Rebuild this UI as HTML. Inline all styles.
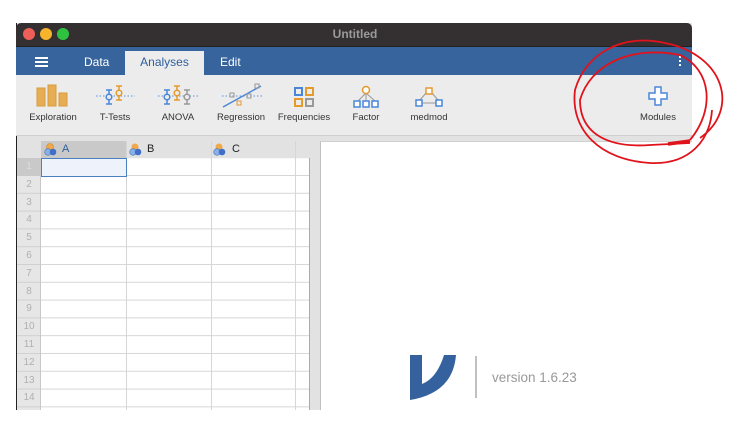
<!DOCTYPE html>
<html><head><style>
*{margin:0;padding:0;box-sizing:border-box}
body{width:740px;height:430px;background:#fff;position:relative;overflow:hidden;font-family:"Liberation Sans",sans-serif}
.a{position:absolute}
.lbl{position:absolute;top:112px;font-size:9.5px;color:#333;text-align:center;width:80px}
.rn{position:absolute;left:17px;width:24px;text-align:center;font-size:10px;color:#b0b0b0}
</style></head><body>
<div class="a" style="left:16px;top:23px;width:676px;height:387px;background:#e2e2e2;border-left:1px solid #222"></div>
<div class="a" style="left:16px;top:23px;width:676px;height:23px;background:#343032;border-radius:5px 5px 0 0"></div>
<div class="a" style="left:23px;top:28px;width:12px;height:12px;border-radius:50%;background:#ed5f57"></div>
<div class="a" style="left:40px;top:28px;width:12px;height:12px;border-radius:50%;background:#f5b42c"></div>
<div class="a" style="left:57px;top:28px;width:12px;height:12px;border-radius:50%;background:#2fc241"></div>
<div class="a" style="left:300px;top:27px;width:110px;text-align:center;color:#9a9a9a;font-weight:bold;font-size:12px">Untitled</div>
<div class="a" style="left:16px;top:46px;width:676px;height:29px;background:#38649e;border-top:1px solid #222"></div>
<div class="a" style="left:35px;top:57px;width:13px;height:2px;background:#fff;box-shadow:0 4px #fff,0 8px #fff"></div>
<div class="a" style="left:84px;top:55px;color:#fff;font-size:12px">Data</div>
<div class="a" style="left:125px;top:51px;width:79px;height:24px;background:#ececec"></div>
<div class="a" style="left:125px;top:55px;width:79px;text-align:center;color:#2e5f9c;font-size:12px">Analyses</div>
<div class="a" style="left:220px;top:55px;color:#fff;font-size:12px">Edit</div>
<div class="a" style="left:679px;top:56px;width:2px;height:2px;background:#fff;box-shadow:0 4px #fff,0 8px #fff"></div>
<div class="a" style="left:16px;top:75px;width:676px;height:61px;background:#ececec;border-bottom:1px solid #cfcfcf"></div>
<svg class="a" style="left:0;top:0" width="740" height="140">
 <g fill="#e7ad55" stroke="#d99a3d" stroke-width="1"><rect x="37" y="88" width="8" height="18"/><rect x="48" y="85" width="8" height="21"/><rect x="59" y="93" width="8" height="13"/></g>
 <g stroke-width="1.5" fill="none">
  <line x1="96" y1="96" x2="135" y2="96" stroke="#8ab0e0" stroke-dasharray="1.5 2"/>
  <path d="M106 90h6M109 90v14M106 104h6" stroke="#4a86d8"/><circle cx="109" cy="97" r="2.8" fill="#ececec" stroke="#4a86d8"/>
  <path d="M116 86h6M119 86v14M116 100h6" stroke="#e59a2e"/><circle cx="119" cy="93" r="2.8" fill="#ececec" stroke="#e59a2e"/>
  <line x1="158" y1="96" x2="198" y2="96" stroke="#8ab0e0" stroke-dasharray="1.5 2"/>
  <path d="M164 90h6M167 90v14M164 104h6" stroke="#4a86d8"/><circle cx="167" cy="97" r="2.8" fill="#ececec" stroke="#4a86d8"/>
  <path d="M174 86h6M177 86v14M174 100h6" stroke="#e59a2e"/><circle cx="177" cy="93" r="2.8" fill="#ececec" stroke="#e59a2e"/>
  <path d="M184 90h6M187 90v14M184 104h6" stroke="#999"/><circle cx="187" cy="97" r="2.8" fill="#ececec" stroke="#999"/>
  <line x1="222" y1="96" x2="262" y2="96" stroke="#8ab0e0" stroke-dasharray="1.5 2"/>
  <line x1="223" y1="107" x2="261" y2="86" stroke="#4a86d8"/>
  <rect x="230" y="93" width="4" height="4" stroke="#999" stroke-width="1"/><rect x="247" y="94" width="4" height="4" stroke="#999" stroke-width="1"/><rect x="237" y="101" width="4" height="4" stroke="#e59a2e" stroke-width="1"/><rect x="255" y="84" width="4" height="4" stroke="#999" stroke-width="1"/>
  <rect x="295" y="88" width="7" height="7" stroke="#4a86d8" stroke-width="2"/><rect x="306" y="88" width="7" height="7" stroke="#e59a2e" stroke-width="2"/>
  <rect x="295" y="99" width="7" height="7" stroke="#e59a2e" stroke-width="2"/><rect x="306" y="99" width="7" height="7" stroke="#999" stroke-width="2"/>
  <path d="M366 93L358 101M366 93V101M366 93L375 101" stroke="#999" stroke-width="1"/>
  <circle cx="366" cy="90" r="3.5" fill="#fff" stroke="#e59a2e"/>
  <rect x="354" y="101" width="6" height="6" fill="#fff" stroke="#4a86d8"/><rect x="363" y="101" width="6" height="6" fill="#fff" stroke="#4a86d8"/><rect x="372" y="101" width="6" height="6" fill="#fff" stroke="#4a86d8"/>
  <path d="M426 93L420 100M432 93L438 100M422 103H436" stroke="#999" stroke-width="1"/>
  <rect x="426" y="88" width="6" height="6" fill="#fff" stroke="#e59a2e"/><rect x="416" y="100" width="6" height="6" fill="#fff" stroke="#4a86d8"/><rect x="436" y="100" width="6" height="6" fill="#fff" stroke="#4a86d8"/>
  <path d="M655 87h6v6h6v6h-6v6h-6v-6h-6v-6h6z" fill="#fff" stroke="#4a86d8" stroke-width="1.5"/>
 </g>
</svg>
<div class="lbl" style="left:13px">Exploration</div>
<div class="lbl" style="left:75px">T-Tests</div>
<div class="lbl" style="left:138px">ANOVA</div>
<div class="lbl" style="left:201px">Regression</div>
<div class="lbl" style="left:264px">Frequencies</div>
<div class="lbl" style="left:326px">Factor</div>
<div class="lbl" style="left:389px">medmod</div>
<div class="lbl" style="left:618px">Modules</div>
<div class="a" style="left:41px;top:158px;width:268px;height:252px;background:#fff;
background-image:linear-gradient(#d6d6d6 1px,transparent 1px);background-size:100% 17.8px;background-position:0 17px"></div>
<div class="a" style="left:17px;top:158px;width:24px;height:252px;background:#e6e6e6;border-right:1px solid #c8c8c8;
background-image:linear-gradient(#d0d0d0 1px,transparent 1px);background-size:100% 17.8px;background-position:0 17px"></div>
<div class="a" style="left:17px;top:158px;width:24px;height:18px;background:#c9c9c9"></div>
<div class="a" style="left:126px;top:141px;width:1px;height:269px;background:#d6d6d6"></div>
<div class="a" style="left:211px;top:141px;width:1px;height:269px;background:#d6d6d6"></div>
<div class="a" style="left:295px;top:141px;width:1px;height:269px;background:#d6d6d6"></div>
<div class="a" style="left:309px;top:158px;width:1px;height:252px;background:#aaa"></div>
<div class="a" style="left:41px;top:158px;width:86px;height:19px;background:#eef2fa;border:1.5px solid #4a7fc0"></div>
<div class="a" style="left:41px;top:141px;width:85px;height:17px;background:#c9c9c9"></div>
<svg class="a" style="left:0;top:141px" width="320" height="17">
 <g><circle cx="50" cy="6" r="3.5" fill="#f0a848" stroke="#c88628" stroke-width=".6"/><circle cx="48" cy="11" r="3.3" fill="#8ab0e8" stroke="#3f6fb8" stroke-width=".6"/><circle cx="53" cy="11" r="3.3" fill="#3f6fc8"/></g>
 <g transform="translate(85 0)"><circle cx="50" cy="6" r="3.5" fill="#f0a848"/><circle cx="48" cy="11" r="3.3" fill="#8ab0e8" stroke="#3f6fb8" stroke-width=".6"/><circle cx="53" cy="11" r="3.3" fill="#3f6fc8"/></g>
 <g transform="translate(169 0)"><circle cx="50" cy="6" r="3.5" fill="#f0a848"/><circle cx="48" cy="11" r="3.3" fill="#8ab0e8" stroke="#3f6fb8" stroke-width=".6"/><circle cx="53" cy="11" r="3.3" fill="#3f6fc8"/></g>
</svg>
<div class="a" style="left:62px;top:143px;font-size:11px;color:#2e5f9c">A</div>
<div class="a" style="left:147px;top:143px;font-size:11px;color:#222">B</div>
<div class="a" style="left:232px;top:143px;font-size:11px;color:#222">C</div>
<div class="rn" style="top:161px;color:#ddd">1</div><div class="rn" style="top:179px">2</div><div class="rn" style="top:197px">3</div><div class="rn" style="top:214px">4</div><div class="rn" style="top:232px">5</div><div class="rn" style="top:250px">6</div><div class="rn" style="top:268px">7</div><div class="rn" style="top:286px">8</div><div class="rn" style="top:303px">9</div><div class="rn" style="top:321px">10</div><div class="rn" style="top:339px">11</div><div class="rn" style="top:357px">12</div><div class="rn" style="top:375px">13</div><div class="rn" style="top:392px">14</div>
<div class="a" style="left:320px;top:141px;width:372px;height:269px;background:#fff;border-left:1px solid #c0c0c0;border-top:1px solid #d0d0d0"></div>
<svg class="a" style="left:0;top:0" width="740" height="430">
 <path d="M410 355H422V384Q437 378 444 355H456Q453 393 410 400Z" fill="#35629e"/>
 <line x1="476" y1="356" x2="476" y2="398" stroke="#aaa" stroke-width="1.5"/>
 <text x="492" y="382" font-family="Liberation Sans" font-size="13.5" fill="#999">version 1.6.23</text>
 <g fill="none" stroke="#e0131c" stroke-width="1.8">
  <path d="M700 138C740 110 725 55 665 43C620 33 585 55 575 90C570 130 600 160 650 163C690 165 710 140 712 110"/>
  <path d="M690 140C715 110 712 70 680 55C630 45 590 65 580 100C580 135 610 148 650 145L690 143"/>
  <path d="M668 144L690 141" stroke-width="3.5"/>
 </g>
</svg>
</body></html>
